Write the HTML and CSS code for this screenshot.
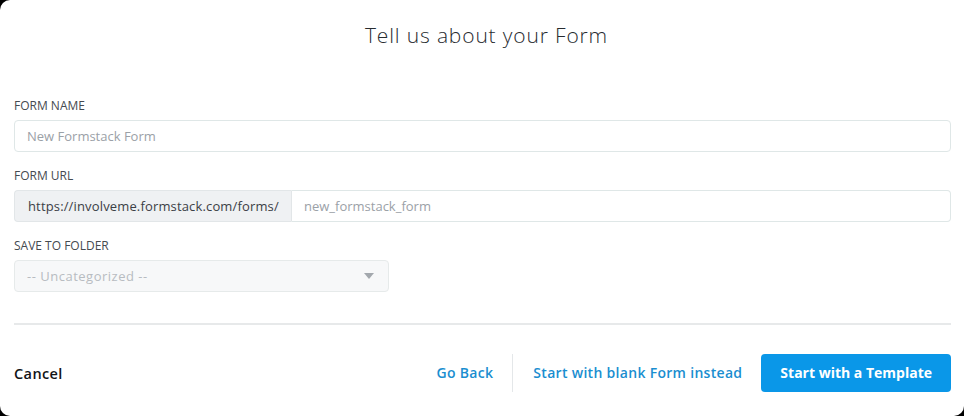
FILE: index.html
```html
<!DOCTYPE html>
<html>
<head>
<meta charset="utf-8">
<link rel="stylesheet" href="styles.css">
</head>
<body>
<div class="modal">
  <h1 class="title">Tell us about your Form</h1>
  <div class="field">
    <label class="label">FORM NAME</label>
    <div class="input"><span class="placeholder">New Formstack Form</span></div>
  </div>
  <div class="field">
    <label class="label">FORM URL</label>
    <div class="input-group">
      <span class="addon">https://involveme.formstack.com/forms/</span>
      <span class="input grow"><span class="placeholder">new_formstack_form</span></span>
    </div>
  </div>
  <div class="field">
    <label class="label">SAVE TO FOLDER</label>
    <div class="select"><span class="select-text">-- Uncategorized --</span><span class="caret"></span></div>
  </div>
  <hr class="rule">
  <div class="footer">
    <span class="cancel">Cancel</span>
    <div class="actions">
      <span class="link">Go Back</span>
      <span class="link divided">Start with blank Form instead</span>
      <span class="btn">Start with a Template</span>
    </div>
  </div>
</div>
</body>
</html>
```
FILE: styles.css
```css
html, body {
  margin: 0;
  padding: 0;
  background: #000;
  height: 100%;
}
body {
  font-family: "Open Sans", "Liberation Sans", sans-serif;
}
.modal {
  background: #fff;
  width: 964px;
  height: 416px;
  box-sizing: border-box;
  border-radius: 10px 0 10px 10px;
  padding: 20px 13px 0 14px;
}
.title {
  margin: 0 0 47px;
  padding-left: 8px;
  text-align: center;
  font-size: 21px;
  line-height: 30px;
  font-weight: 300;
  letter-spacing: 0.85px;
  color: #272b2f;
}
.field {
  margin-bottom: 15px;
}
.label {
  display: block;
  font-size: 12px;
  line-height: 18px;
  color: #454a50;
  margin-bottom: 5px;
}
.input {
  box-sizing: border-box;
  height: 32px;
  border: 1px solid #dfe7e7;
  border-radius: 4px;
  display: flex;
  align-items: center;
  padding: 0 12px;
  font-size: 13px;
}
.placeholder {
  color: #9ba1a7;
}
.input-group {
  display: flex;
  height: 32px;
}
.addon {
  box-sizing: border-box;
  display: flex;
  align-items: center;
  padding: 0 12px 0 13px;
  background: #eff1f3;
  border: 1px solid #e2e6e8;
  border-right: none;
  border-radius: 4px 0 0 4px;
  font-size: 13px;
  letter-spacing: 0.15px;
  color: #3b4046;
  width: 277px;
  white-space: nowrap;
}
.input.grow {
  flex: 1;
  height: 32px;
  border-radius: 0 4px 4px 0;
  border-left: 1px solid #e2e6e8;
}
.select {
  box-sizing: border-box;
  width: 375px;
  height: 32px;
  background: #f7f8f9;
  border: 1px solid #e6eaea;
  border-radius: 4px;
  display: flex;
  align-items: center;
  justify-content: space-between;
  padding: 0 12px;
  font-size: 13px;
}
.select-text {
  color: #b8bcc1;
  letter-spacing: 0.5px;
}
.caret {
  width: 0;
  height: 0;
  border-left: 5px solid transparent;
  border-right: 5px solid transparent;
  border-top: 6px solid #a3a8ad;
  margin-right: 2px;
}
.rule {
  border: none;
  border-top: 2px solid #e7e9ea;
  margin: 31px 0 29px;
}
.footer {
  display: flex;
  align-items: center;
  justify-content: space-between;
}
.cancel {
  font-size: 14.5px;
  font-weight: 600;
  letter-spacing: 0.4px;
  color: #121417;
}
.actions {
  display: flex;
  align-items: center;
}
.link {
  font-size: 14px;
  font-weight: 600;
  letter-spacing: 0.3px;
  color: #1a8ed0;
  padding: 0 19px;
  line-height: 38px;
}
.link.divided {
  border-left: 1px solid #e4e7e9;
  padding-left: 20px;
}
.btn {
  background: #0a97e8;
  color: #fff;
  font-size: 14px;
  font-weight: 700;
  height: 38px;
  line-height: 38px;
  padding: 0 19px;
  border-radius: 4px;
}
```
